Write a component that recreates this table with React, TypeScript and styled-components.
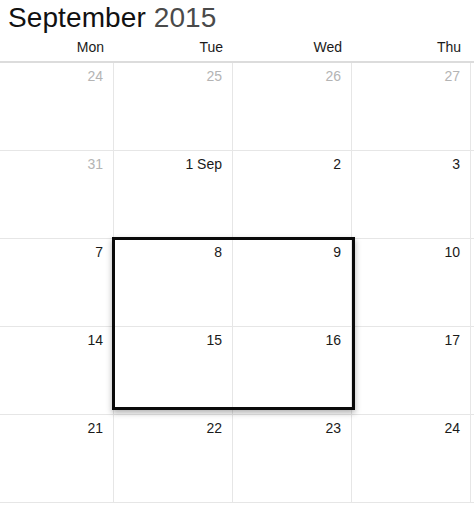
import React from "react";
import styled, { createGlobalStyle } from "styled-components";

const Global = createGlobalStyle`
  html, body { margin: 0; padding: 0; background: #fff; }
  body { font-family: "Liberation Sans", Arial, sans-serif; overflow: hidden; }
`;

const Page = styled.div`
  width: 474px;
  height: 506px;
  background: #fff;
  overflow: hidden;
`;

const Title = styled.div`
  height: 36px;
  line-height: 36px;
  padding-left: 8px;
  font-size: 28px;
  color: #111;
  white-space: nowrap;
  letter-spacing: 0.1px;
`;

const Year = styled.span`
  color: #4a4a4a;
  font-weight: 300;
`;

const Cols = `114px 119px 119px 119px 1fr`;

const WeekHeader = styled.div`
  display: grid;
  grid-template-columns: ${Cols};
  height: 25px;
  border-bottom: 2px solid #dcdcdc;
`;

const WeekLabel = styled.div`
  font-size: 14px;
  line-height: 17px;
  padding-top: 3px;
  padding-right: 10px;
  text-align: right;
  color: #1a1a1a;
`;

const Grid = styled.div`
  position: relative;
  display: grid;
  grid-template-columns: ${Cols};
  grid-auto-rows: 88px;
`;

const Cell = styled.div<{ $muted?: boolean }>`
  border-right: 1px solid #e6e6e6;
  border-bottom: 1px solid #e6e6e6;
  padding: 5px 10px 0 0;
  text-align: right;
  font-size: 14px;
  line-height: 17px;
  color: ${(p) => (p.$muted ? "#b4b4b4" : "#1a1a1a")};
`;

const Selection = styled.div`
  position: absolute;
  left: 112px;
  top: 174px;
  width: 243px;
  height: 173px;
  box-sizing: border-box;
  border: 3px solid #0a0a0a;
  box-shadow: 0 3px 6px rgba(0, 0, 0, 0.3);
  pointer-events: none;
`;

type Day = { label: string; muted?: boolean };

const rows: Day[][] = [
  [{ label: "24", muted: true }, { label: "25", muted: true }, { label: "26", muted: true }, { label: "27", muted: true }, { label: "" }],
  [{ label: "31", muted: true }, { label: "1 Sep" }, { label: "2" }, { label: "3" }, { label: "" }],
  [{ label: "7" }, { label: "8" }, { label: "9" }, { label: "10" }, { label: "" }],
  [{ label: "14" }, { label: "15" }, { label: "16" }, { label: "17" }, { label: "" }],
  [{ label: "21" }, { label: "22" }, { label: "23" }, { label: "24" }, { label: "" }],
];

const weekdays = ["Mon", "Tue", "Wed", "Thu", ""];

export default function App() {
  return (
    <Page>
      <Global />
      <Title>
        September <Year>2015</Year>
      </Title>
      <WeekHeader>
        {weekdays.map((d, i) => (
          <WeekLabel key={i}>{d}</WeekLabel>
        ))}
      </WeekHeader>
      <Grid>
        {rows.map((r, ri) =>
          r.map((c, ci) => (
            <Cell key={`${ri}-${ci}`} $muted={c.muted}>
              {c.label}
            </Cell>
          ))
        )}
        <Selection />
      </Grid>
    </Page>
  );
}
